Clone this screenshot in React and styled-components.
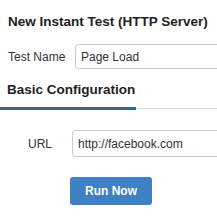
import React from "react";
import styled, { createGlobalStyle } from "styled-components";

const Global = createGlobalStyle`
  body {
    margin: 0;
    background: #fff;
    font-family: "Liberation Sans", Arial, sans-serif;
    color: #333;
    overflow: hidden;
  }
`;

const Page = styled.div`
  width: 217px;
  height: 217px;
  overflow: hidden;
`;

const Title = styled.h1`
  margin: 0;
  padding: 13px 0 0 8px;
  font-size: 13.5px;
  line-height: 17px;
  font-weight: bold;
  color: #222;
  white-space: nowrap;
`;

const Row = styled.div`
  display: flex;
  align-items: center;
  padding-left: ${(p) => p.$indent}px;
  margin-top: ${(p) => p.$top}px;
  white-space: nowrap;
`;

const Label = styled.label`
  font-size: 12px;
  color: #333;
  width: ${(p) => p.$width}px;
  text-align: ${(p) => p.$align || "left"};
  flex-shrink: 0;
`;

const Input = styled.input`
  box-sizing: border-box;
  height: ${(p) => p.$h}px;
  width: 200px;
  flex-shrink: 0;
  margin-left: ${(p) => p.$gap || 0}px;
  border: 1px solid #ccc;
  border-radius: 3px;
  padding: 0 5px;
  font-family: "Liberation Sans", Arial, sans-serif;
  font-size: 12px;
  color: #333;
  outline: none;
`;

const Tabs = styled.div`
  margin-top: 12px;
  border-bottom: 1px solid #ddd;
  white-space: nowrap;
`;

const Tab = styled.div`
  display: inline-block;
  vertical-align: top;
  width: 136px;
  box-sizing: border-box;
  padding: 0 0 9px 7px;
  font-size: 13.5px;
  line-height: 17px;
  font-weight: bold;
  color: #222;
  border-bottom: 3px solid #336699;
  margin-bottom: -2px;
`;

const Button = styled.button`
  display: block;
  width: 82px;
  height: 28px;
  border: none;
  border-radius: 3px;
  background: #3f80c2;
  color: #fff;
  font-family: "Liberation Sans", Arial, sans-serif;
  font-size: 12px;
  font-weight: bold;
  cursor: pointer;
`;

const ButtonRow = styled.div`
  padding-left: 70px;
  margin-top: 20px;
`;

export default function App() {
  return (
    <Page>
      <Global />
      <Title>New Instant Test (HTTP Server)</Title>
      <Row $indent={8} $top={14}>
        <Label $width={67}>Test Name</Label>
        <Input $h={25} defaultValue="Page Load" />
      </Row>
      <Tabs>
        <Tab>Basic Configuration</Tab>
      </Tabs>
      <Row $indent={0} $top={21}>
        <Label $width={52} $align="right">URL</Label>
        <Input $h={27} $gap={20} defaultValue="http://facebook.com" />
      </Row>
      <ButtonRow>
        <Button>Run Now</Button>
      </ButtonRow>
    </Page>
  );
}
